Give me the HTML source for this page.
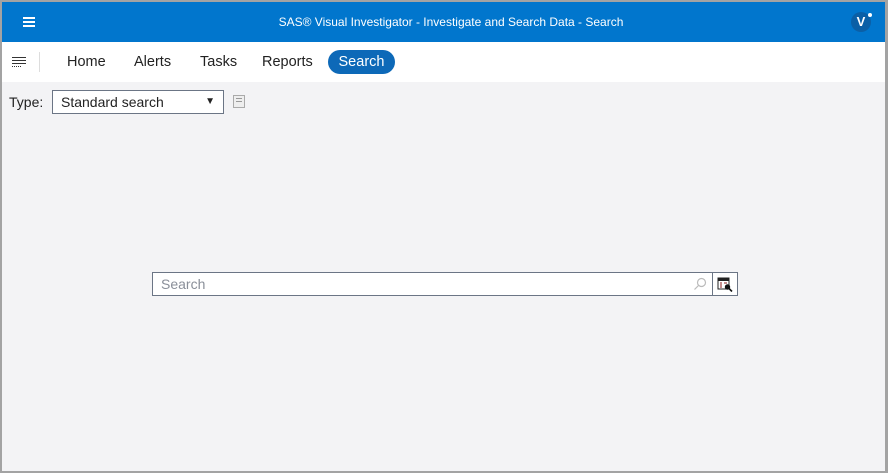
<!DOCTYPE html>
<html><head><style>
*{box-sizing:border-box;margin:0;padding:0}
body{width:888px;height:473px;overflow:hidden;font-family:"Liberation Sans",sans-serif;background:#f3f3f5;position:relative}
.frame{position:absolute;left:0;top:0;width:888px;height:473px;border:2px solid #a3a3a3;border-right-width:3px}
.hdr{position:absolute;left:2px;top:2px;width:883px;height:40px;background:#0176cd;color:#fff}
.hdr .t{position:absolute;left:0;right:0;top:13px;text-align:center;font-size:12px;padding-left:15px}
.nav{position:absolute;left:2px;top:42px;width:883px;height:40px;background:#fff}
.nav span{position:absolute;top:12px;font-size:14.5px;color:#222}
.pill{position:absolute;left:328px;top:50px;width:67px;height:24px;border-radius:12px;background:#0d69b8;color:#fff;font-size:14.5px;text-align:center;line-height:25px}
</style></head><body>
<div class="hdr">
 <div style="position:absolute;left:21px;top:15px;width:12px;height:2px;background:#fff;box-shadow:0 4px 0 #fff,0 8px 0 #fff"></div>
 <div class="t">SAS® Visual Investigator - Investigate and Search Data - Search</div>
 <div style="position:absolute;left:849px;top:10px;width:20px;height:20px;border-radius:50%;background:#0b5fa6;font-weight:bold;font-size:13px;text-align:center;line-height:20px">V</div>
 <div style="position:absolute;left:866px;top:11px;width:4px;height:4px;border-radius:50%;background:#fff"></div>
</div>
<div class="nav">
 <div style="position:absolute;left:10px;top:15px;width:14px;height:1px;background:#333;box-shadow:0 3px 0 #333,0 6px 0 #333"></div>
 <div style="position:absolute;left:10px;top:24px;width:9px;height:1px;border-top:1px dotted #333"></div>
 <div style="position:absolute;left:37px;top:10px;width:1px;height:20px;background:#ddd"></div>
 <span style="left:65px">Home</span>
 <span style="left:132px">Alerts</span>
 <span style="left:198px">Tasks</span>
 <span style="left:260px">Reports</span>
</div>
<div class="pill">Search</div>
<div style="position:absolute;left:9px;top:94px;font-size:14px;color:#222">Type:</div>
<div style="position:absolute;left:52px;top:90px;width:172px;height:24px;background:#fff;border:1px solid #6b7585;font-size:14px;color:#222;padding:3px 8px">Standard search<span style="position:absolute;right:8px;top:5px;font-size:10px">▼</span></div>
<div style="position:absolute;left:233px;top:95px;width:12px;height:13px;border:1px solid #aaa;background:#eee"><div style="margin:2px 2px;height:1px;background:#999;box-shadow:0 3px 0 #999"></div></div>
<div style="position:absolute;left:152px;top:272px;width:586px;height:24px;background:#fff;border:1px solid #6b7585"></div>
<div style="position:absolute;left:161px;top:276px;font-size:14px;color:#8a8f99">Search</div>
<svg style="position:absolute;left:693px;top:277px" width="14" height="14"><circle cx="8.5" cy="5.5" r="4" fill="none" stroke="#bbb" stroke-width="1.2"/><path d="M5.5 8.5L1.5 12.5" stroke="#bbb" stroke-width="1.2"/></svg>
<div style="position:absolute;left:712px;top:272px;width:1px;height:24px;background:#6b7585"></div>
<svg style="position:absolute;left:717px;top:277px" width="16" height="15"><rect x="1" y="1" width="11" height="11" fill="#fff" stroke="#222"/><rect x="1" y="1" width="11" height="3" fill="#222"/><path d="M3 6h2M7 6h3M3 8h2M3 10h2" stroke="#8a1a1a"/><circle cx="10.5" cy="10" r="2.7" fill="#111"/><path d="M12 11.5l3 3" stroke="#111" stroke-width="1.6"/></svg>
<div class="frame"></div>
</body></html>
